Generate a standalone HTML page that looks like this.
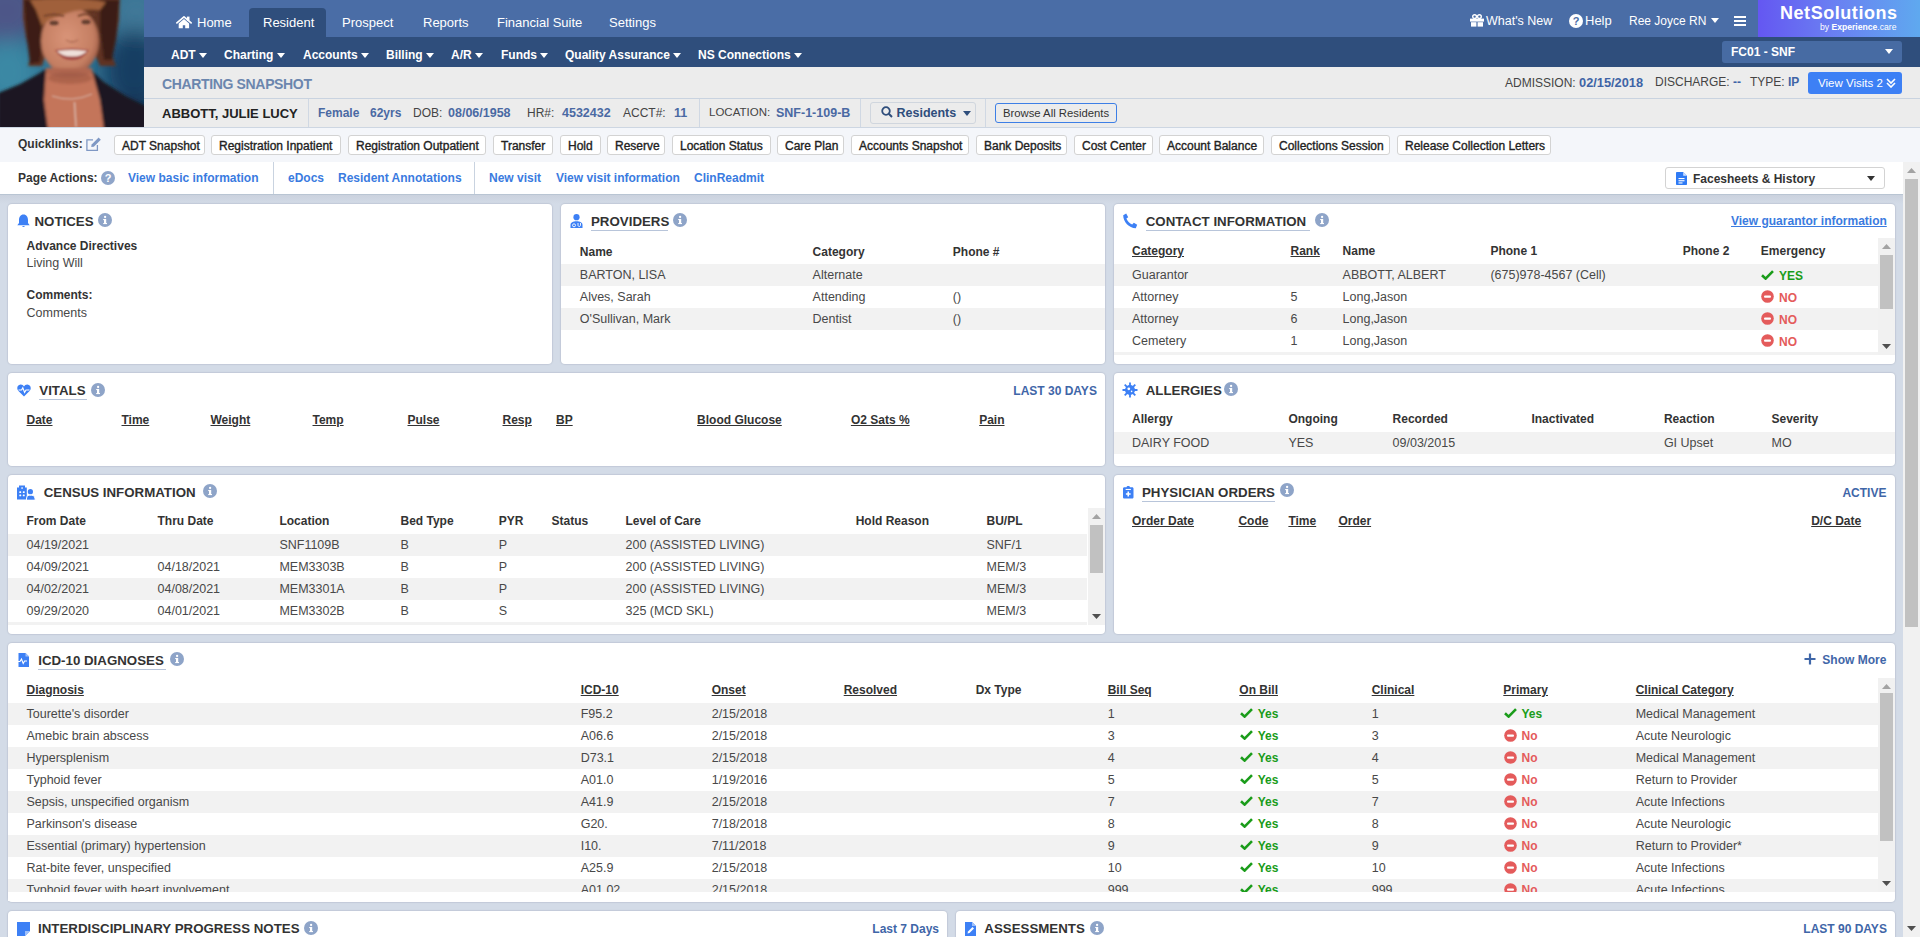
<!DOCTYPE html>
<html><head><meta charset="utf-8">
<style>
*{box-sizing:border-box}
html,body{margin:0;padding:0}
body{width:1920px;height:937px;overflow:hidden;position:relative;font-family:"Liberation Sans",sans-serif;color:#333;background:#fff}
.a{position:absolute;white-space:nowrap}
#photo{left:0;top:0;width:144px;height:127px;overflow:hidden;background:#1f4f72}
#topnav{left:144px;top:0;width:1614px;height:37px;background:#4a6da6;color:#fff;font-size:13px}
#logo{left:1758px;top:0;width:162px;height:37px;background:linear-gradient(90deg,#6457f2 0%,#6a7ef2 45%,#5fa9ef 100%);color:#fff}
#subnav{left:144px;top:37px;width:1776px;height:30px;background:#2f4e7c;color:#fff;font-size:12px;font-weight:bold}
#snap{left:144px;top:67px;width:1776px;height:60px;background:#ececec}
#ql{left:0;top:127px;width:1920px;height:35px;background:#f4f6fa;border-top:1px solid #cdd6e2}
#scroll{left:0;top:162px;width:1920px;height:775px;background:linear-gradient(#cbd2de 33px,#d3dbe7 42px);overflow:hidden}
#sbar{left:1903px;top:0;width:17px;height:775px;background:#f1f1f1}
#pa{left:0;top:0;width:1903px;height:33px;background:#fff;border-bottom:1px solid #b9c5d3}
.caret{display:inline-block;width:0;height:0;border-left:4px solid transparent;border-right:4px solid transparent;border-top:5px solid currentColor;vertical-align:middle}
.qb{position:absolute;top:7px;height:20px;border:1px solid #d3d3d3;border-radius:3px;background:#fff;font-size:12px;line-height:20.5px;padding:0 7px;color:#222;-webkit-text-stroke:.35px #222}
.lnk{color:#3a7be0;font-weight:bold;font-size:12px}
.panel{position:absolute;background:#fff;border-radius:4px;box-shadow:0 0 1px 1px rgba(120,130,150,.18)}
.ptitle{position:absolute;font-size:13px;font-weight:bold;color:#333;letter-spacing:.1px}
.ptitle u{text-decoration:none;border-bottom:1px solid #b9c6dc;padding-bottom:1px}
.info{position:absolute;width:14px;height:14px;border-radius:50%;background:#8fa5c9;color:#fff;font-size:10px;font-weight:bold;text-align:center;line-height:14px;font-family:"Liberation Serif",serif}
.th{position:absolute;font-size:12px;font-weight:bold;color:#333}
.th.u{text-decoration:underline}
.td{position:absolute;font-size:12px;color:#444}
.stripe{position:absolute;background:#f2f2f2;height:22px}
.yes{color:#1d9b1d;font-weight:bold}
.no{color:#e25252;font-weight:bold}
</style></head>
<body>

<!-- PHOTO -->
<div id="photo" class="a">
<svg width="144" height="127" viewBox="0 0 144 127">
<defs>
<filter id="bl" x="-50%" y="-50%" width="200%" height="200%"><feGaussianBlur stdDeviation="10"/></filter>
<filter id="bl2" x="-20%" y="-20%" width="140%" height="140%"><feGaussianBlur stdDeviation="1.8"/></filter>
<filter id="bl3" x="-30%" y="-30%" width="160%" height="160%"><feGaussianBlur stdDeviation=".9"/></filter>
<radialGradient id="face" cx=".45" cy=".45" r=".6"><stop offset="0" stop-color="#d99478"/><stop offset=".75" stop-color="#c47e62"/><stop offset="1" stop-color="#9c5a44"/></radialGradient>
</defs>
<rect width="144" height="127" fill="#2f7090"/>
<g filter="url(#bl)">
<ellipse cx="6" cy="10" rx="36" ry="32" fill="#4d5688"/>
<ellipse cx="8" cy="72" rx="30" ry="32" fill="#3a88a4"/>
<ellipse cx="136" cy="14" rx="26" ry="26" fill="#3f7898"/>
<ellipse cx="134" cy="70" rx="30" ry="40" fill="#173d62"/>
<ellipse cx="136" cy="120" rx="26" ry="20" fill="#102a48"/>
</g>
<g filter="url(#bl2)">
<path d="M23 -4 L120 -4 L119 20 L116 40 L112 56 L116 66 L100 66 L92 48 L48 48 L42 66 L28 66 L31 56 L26 38 L23 18 Z" fill="#5e3220"/>
<path d="M24 0 L40 0 L42 40 L40 62 L30 64 L27 40 Z" fill="#3e1e14"/>
<path d="M100 0 L119 0 L116 40 L112 60 L104 60 L100 30 Z" fill="#3a1e16"/>
<ellipse cx="70" cy="41" rx="29" ry="34" fill="url(#face)"/>
<path d="M46 68 L92 68 L96 100 L46 100 Z" fill="#b06650"/>
<path d="M44 72 Q70 84 94 72 L100 100 L106 130 L46 130 L42 100 Z" fill="#c4745a"/>
<ellipse cx="70" cy="78" rx="22" ry="6" fill="#9a5542" opacity=".55"/>
<path d="M-2 93 L20 84 L38 74 L46 69 L44 100 L48 130 L-2 130 Z" fill="#1b1720"/>
<path d="M92 71 L104 82 L126 96 L146 106 L146 130 L104 130 L100 100 Z" fill="#1a1620"/>
<path d="M30 0 Q70 -4 106 2 L100 10 Q78 8 60 16 Q50 18 42 26 L36 10 Z" fill="#a0603a"/>
</g>
<g filter="url(#bl3)">
<path d="M44 16 Q54 13 64 16" stroke="#6a3a28" stroke-width="1.6" fill="none"/>
<path d="M78 16 Q88 12 96 15" stroke="#6a3a28" stroke-width="1.6" fill="none"/>
<ellipse cx="54" cy="23" rx="4.5" ry="2.2" fill="#4a2a22" opacity=".8"/>
<ellipse cx="86" cy="22" rx="4.5" ry="2.2" fill="#4a2a22" opacity=".8"/>
<path d="M66 40 Q72 44 78 40" stroke="#9a5a44" stroke-width="1.4" fill="none" opacity=".7"/>
<path d="M55 50 Q72 47 89 50 Q83 60 72 60 Q61 60 55 50 Z" fill="#a24a44"/>
<path d="M57 51 Q72 49 87 51 Q82 56.5 72 56.5 Q62 56.5 57 51 Z" fill="#efe0da"/>
<path d="M52 96 Q72 103 92 94" stroke="#d9c0b8" stroke-width=".9" fill="none"/>
<path d="M74.5 102 L76 127" stroke="#dcc4bc" stroke-width="1.3" fill="none"/>
</g>
</svg>
</div>

<!-- TOP NAV -->
<div id="topnav" class="a">
  <div class="a" style="left:105px;top:8px;width:77px;height:29px;background:#2f4e7c;border-radius:4px 4px 0 0"></div>
  <svg class="a" style="left:32px;top:15.5px" width="16" height="13" viewBox="0 0 16 13"><path d="M0.9 6.9 L8 0.9 L15.1 6.9" stroke="#fff" stroke-width="1.7" fill="none" stroke-linecap="round"/><rect x="10.9" y="0.6" width="2.6" height="4.2" fill="#fff"/><path d="M2.7 7.4 L8 3 L13.1 7.4 L13.1 12.3 L9.2 12.3 L9.2 9.3 L6.8 9.3 L6.8 12.3 L2.7 12.3 Z" fill="#fff"/></svg>
  <div class="a" style="left:53px;top:15px;font-size:13px">Home</div>
  <div class="a" style="left:119px;top:15px;font-size:13px">Resident</div>
  <div class="a" style="left:198px;top:15px;font-size:13px">Prospect</div>
  <div class="a" style="left:279px;top:15px;font-size:13px">Reports</div>
  <div class="a" style="left:353px;top:15px;font-size:13px">Financial Suite</div>
  <div class="a" style="left:465px;top:15px;font-size:13px">Settings</div>

  <svg class="a" style="left:1326px;top:13.5px" width="14" height="13" viewBox="0 0 14 13"><circle cx="4.6" cy="2.6" r="1.9" stroke="#fff" stroke-width="1.4" fill="none"/><circle cx="9.4" cy="2.6" r="1.9" stroke="#fff" stroke-width="1.4" fill="none"/><rect x="0" y="4.6" width="14" height="3" fill="#fff"/><rect x="1" y="8.2" width="5.4" height="4.4" fill="#fff"/><rect x="7.6" y="8.2" width="5.4" height="4.4" fill="#fff"/></svg>
  <div class="a" style="left:1342px;top:14px;font-size:12.5px">What's New</div>
  <div class="a" style="left:1425px;top:13.5px;width:14px;height:14px;border-radius:50%;background:#fff;color:#4a6da6;font-size:11px;font-weight:bold;text-align:center;line-height:14px">?</div>
  <div class="a" style="left:1441px;top:13px;font-size:13px">Help</div>
  <div class="a" style="left:1485px;top:14px;font-size:12px">Ree Joyce RN <span class="caret" style="margin-left:1px;margin-top:-2px"></span></div>
  <div class="a" style="left:1590px;top:16px;width:12px;height:2px;background:#fff"></div>
  <div class="a" style="left:1590px;top:20px;width:12px;height:2px;background:#fff"></div>
  <div class="a" style="left:1590px;top:24px;width:12px;height:2px;background:#fff"></div>
</div>
<div id="logo" class="a">
  <div class="a" style="left:22px;top:3px;font-size:18px;font-weight:bold;letter-spacing:.55px">NetSolutions</div>
  <div class="a" style="left:62px;top:22px;font-size:8.6px">by <b>Experience</b>.care</div>
</div>

<!-- SUB NAV -->
<div id="subnav" class="a">
  <div class="a" style="left:27px;top:11px">ADT <span class="caret"></span></div>
  <div class="a" style="left:80px;top:11px">Charting <span class="caret"></span></div>
  <div class="a" style="left:159px;top:11px">Accounts <span class="caret"></span></div>
  <div class="a" style="left:242px;top:11px">Billing <span class="caret"></span></div>
  <div class="a" style="left:307px;top:11px">A/R <span class="caret"></span></div>
  <div class="a" style="left:357px;top:11px">Funds <span class="caret"></span></div>
  <div class="a" style="left:421px;top:11px">Quality Assurance <span class="caret"></span></div>
  <div class="a" style="left:554px;top:11px">NS Connections <span class="caret"></span></div>
  <div class="a" style="left:1578px;top:4px;width:180px;height:22px;background:#476ba3;border-radius:3px">
    <div class="a" style="left:9px;top:4px">FC01 - SNF</div>
    <span class="a caret" style="left:163px;top:8px"></span>
  </div>
</div>

<!-- SNAPSHOT + PATIENT BAR -->
<div id="snap" class="a">
  <div class="a" style="left:18px;top:9.5px;font-size:14px;line-height:1;letter-spacing:-.35px;font-weight:bold;color:#6b86ae">CHARTING SNAPSHOT</div>
  <div class="a" style="left:1361px;top:8px;font-size:12px;color:#444">ADMISSION: <b style="color:#3f64a6;font-size:12.8px">02/15/2018</b></div>
  <div class="a" style="left:1511px;top:8px;font-size:12px;color:#444">DISCHARGE: <b style="color:#3f64a6">--</b></div>
  <div class="a" style="left:1606px;top:8px;font-size:12px;color:#444">TYPE: <b style="color:#3f64a6">IP</b></div>
  <div class="a" style="left:1664px;top:5px;width:94px;height:22px;background:#3d80f5;border-radius:3px;color:#fff;font-size:11.5px;padding:5px 0 0 10px">View Visits 2 <svg width="10" height="10" viewBox="0 0 10 10" style="vertical-align:-1px"><path d="M1 1 L5 5 L9 1 M1 5 L5 9 L9 5" stroke="#fff" stroke-width="1.6" fill="none"/></svg></div>
  <div class="a" style="left:0;top:31px;width:1776px;height:1px;background:#c9d3e0"></div>
  <div class="a" style="left:164px;top:32px;width:1px;height:28px;background:#d0d8e3"></div>
  <div class="a" style="left:18px;top:38.5px;font-size:13px;font-weight:bold;color:#222">ABBOTT, JULIE LUCY</div>
  <div class="a" style="left:174px;top:38.5px;font-size:12px;font-weight:bold;color:#4a69a3">Female</div>
  <div class="a" style="left:226px;top:38.5px;font-size:12px;font-weight:bold;color:#4a69a3">62yrs</div>
  <div class="a" style="left:269px;top:38.5px;font-size:12px;color:#444">DOB:</div>
  <div class="a" style="left:304px;top:38.5px;font-size:12.5px;font-weight:bold;color:#4a69a3">08/06/1958</div>
  <div class="a" style="left:383px;top:38.5px;font-size:12px;color:#444">HR#:</div>
  <div class="a" style="left:418px;top:38.5px;font-size:12.5px;font-weight:bold;color:#4a69a3">4532432</div>
  <div class="a" style="left:479px;top:38.5px;font-size:12px;color:#444">ACCT#:</div>
  <div class="a" style="left:530px;top:38.5px;font-size:12.5px;font-weight:bold;color:#4a69a3">11</div>
  <div class="a" style="left:555px;top:32px;width:1px;height:28px;background:#d0d8e3"></div>
  <div class="a" style="left:565px;top:38.5px;font-size:11.5px;color:#444">LOCATION:</div>
  <div class="a" style="left:632px;top:38.5px;font-size:12.5px;font-weight:bold;color:#4a69a3">SNF-1-109-B</div>
  <div class="a" style="left:716px;top:32px;width:1px;height:28px;background:#d0d8e3"></div>
  <div class="a" style="left:726px;top:35px;width:106px;height:22px;border:1px solid #d0d6de;border-radius:3px;color:#2f4e7c;font-size:12.5px;font-weight:bold;padding:3px 0 0 10px">
    <svg width="12" height="12" viewBox="0 0 12 12" style="vertical-align:-1px"><circle cx="5" cy="5" r="3.8" stroke="#2f4e7c" stroke-width="1.8" fill="none"/><path d="M7.8 7.8 L11 11" stroke="#2f4e7c" stroke-width="2"/></svg> Residents <span class="caret" style="margin-left:3px"></span>
  </div>
  <div class="a" style="left:841px;top:32px;width:1px;height:28px;background:#d0d8e3"></div>
  <div class="a" style="left:851px;top:36px;width:122px;height:20px;border:1px solid #3d7fe6;border-radius:3px;color:#333;font-size:11.3px;text-align:center;line-height:18px">Browse All Residents</div>
</div>

<!-- QUICKLINKS -->
<div id="ql" class="a">
  <div class="a" style="left:18px;top:9px;font-size:12px;font-weight:bold;color:#333">Quicklinks:</div>
  <svg class="a" style="left:86px;top:9px" width="16" height="15" viewBox="0 0 16 15"><path d="M7 2.8 H0.9 V13.3 H11.4 V8" stroke="#7f98c4" stroke-width="1.3" fill="none"/><path d="M5.2 10 L5.6 7.6 L12.6 0.6 L14.8 2.8 L7.8 9.8 Z" fill="#7f98c4"/></svg>
  <div class="qb" style="left:114px;width:91px">ADT Snapshot</div>
  <div class="qb" style="left:211px;width:130px">Registration Inpatient</div>
  <div class="qb" style="left:348px;width:138px">Registration Outpatient</div>
  <div class="qb" style="left:493px;width:60px">Transfer</div>
  <div class="qb" style="left:560px;width:41px">Hold</div>
  <div class="qb" style="left:607px;width:58px">Reserve</div>
  <div class="qb" style="left:672px;width:99px">Location Status</div>
  <div class="qb" style="left:777px;width:67px">Care Plan</div>
  <div class="qb" style="left:851px;width:118px">Accounts Snapshot</div>
  <div class="qb" style="left:976px;width:91px">Bank Deposits</div>
  <div class="qb" style="left:1074px;width:79px">Cost Center</div>
  <div class="qb" style="left:1159px;width:105px">Account Balance</div>
  <div class="qb" style="left:1271px;width:119px">Collections Session</div>
  <div class="qb" style="left:1397px;width:154px">Release Collection Letters</div>
</div>

<!-- SCROLL AREA -->
<div id="scroll" class="a">
  <div id="pa" class="a">
    <div class="a" style="left:18px;top:9px;font-size:12px;font-weight:bold;color:#333">Page Actions:</div>
    <div class="a" style="left:101px;top:9px;width:14px;height:14px;border-radius:50%;background:#8fa5c9;color:#fff;font-size:11px;font-weight:bold;text-align:center;line-height:14px">?</div>
    <div class="a lnk" style="left:128px;top:9px">View basic information</div>
    <div class="a" style="left:273px;top:0;width:1px;height:32px;background:#c9d3e0"></div>
    <div class="a lnk" style="left:288px;top:9px">eDocs</div>
    <div class="a lnk" style="left:338px;top:9px">Resident Annotations</div>
    <div class="a" style="left:474px;top:0;width:1px;height:32px;background:#c9d3e0"></div>
    <div class="a lnk" style="left:489px;top:9px">New visit</div>
    <div class="a lnk" style="left:556px;top:9px">View visit information</div>
    <div class="a lnk" style="left:694px;top:9px">ClinReadmit</div>
    <div class="a" style="left:1665px;top:5px;width:220px;height:22px;border:1px solid #d3d3d3;border-radius:3px;font-size:12px;font-weight:bold;color:#333">
      <svg class="a" style="left:10px;top:4px" width="11" height="13" viewBox="0 0 11 13"><path d="M0.8 0 H7.2 L11 3.8 V12.2 Q11 13 10.2 13 H0.8 Q0 13 0 12.2 V0.8 Q0 0 0.8 0 Z" fill="#2f7bf5"/><path d="M7.2 0 V3.8 H11 Z" fill="#cfe0fd"/><rect x="2.5" y="6" width="6" height="1.1" fill="#fff"/><rect x="2.5" y="8.2" width="6" height="1.1" fill="#fff"/><rect x="2.5" y="10.4" width="4" height="1.1" fill="#fff"/></svg>
      <div class="a" style="left:27px;top:4px">Facesheets &amp; History</div>
      <span class="a caret" style="left:201px;top:8px;color:#333"></span>
    </div>
  </div>

  <div id="sbar" class="a">
    <div class="a" style="left:2px;top:17px;width:13px;height:448px;background:#c1c1c1"></div>
  </div>
</div>


<!-- PANELS -->
<div class="a panel" style="left:8px;top:204px;width:544px;height:160px"></div>
<svg class="a" style="left:17px;top:214px" width="13" height="14" viewBox="0 0 13 14"><path d="M6.5 0.5 C3.5 0.5 2 3 2 6 L2 9 L0.3 11.3 L12.7 11.3 L11 9 L11 6 C11 3 9.5 0.5 6.5 0.5 Z" fill="#3d80f5"/><path d="M5 12 Q6.5 14.2 8 12 Z" fill="#3d80f5"/></svg>
<div class="a" style="left:34.5px;top:214.7px;font-size:13.3px;line-height:1;color:#333;font-weight:bold">NOTICES</div>
<svg class="a" style="left:98px;top:213px" width="14" height="14" viewBox="0 0 14 14"><circle cx="7" cy="7" r="7" fill="#8ea4c8"/><rect x="6" y="6" width="2.2" height="5" fill="#fff"/><rect x="5.2" y="6" width="2" height="1.1" fill="#fff"/><rect x="5.2" y="10" width="3.8" height="1.1" fill="#fff"/><circle cx="7.1" cy="4" r="1.15" fill="#fff"/></svg>
<div class="a" style="left:26.5px;top:239.6px;font-size:12px;line-height:1;color:#333;font-weight:bold">Advance Directives</div>
<div class="a" style="left:26.5px;top:257.4px;font-size:12.5px;line-height:1;color:#484848">Living Will</div>
<div class="a" style="left:26.5px;top:289.2px;font-size:12px;line-height:1;color:#333;font-weight:bold">Comments:</div>
<div class="a" style="left:26.5px;top:306.8px;font-size:12.5px;line-height:1;color:#484848">Comments</div>
<div class="a panel" style="left:561px;top:204px;width:544px;height:160px"></div>
<svg class="a" style="left:570px;top:214px" width="13" height="14" viewBox="0 0 13 14"><circle cx="6.5" cy="3.2" r="3.1" fill="#3d80f5"/><path d="M0.5 14 L0.5 11 C0.5 8.5 3 7.3 6.5 7.3 C10 7.3 12.5 8.5 12.5 11 L12.5 14 Z" fill="#3d80f5"/><circle cx="4" cy="11.3" r="1.5" fill="none" stroke="#fff" stroke-width=".9"/><path d="M8 9 L8 11.5 A1.3 1.3 0 0 0 10.5 11.5 L10.5 9" fill="none" stroke="#fff" stroke-width=".9"/></svg>
<div class="a" style="left:591.0px;top:214.7px;font-size:13.3px;line-height:1;color:#333;font-weight:bold">PROVIDERS</div>
<div class="a" style="left:591px;top:230px;width:77px;height:1px;background:#b8c5da;"></div>
<svg class="a" style="left:673px;top:213px" width="14" height="14" viewBox="0 0 14 14"><circle cx="7" cy="7" r="7" fill="#8ea4c8"/><rect x="6" y="6" width="2.2" height="5" fill="#fff"/><rect x="5.2" y="6" width="2" height="1.1" fill="#fff"/><rect x="5.2" y="10" width="3.8" height="1.1" fill="#fff"/><circle cx="7.1" cy="4" r="1.15" fill="#fff"/></svg>
<div class="a" style="left:579.8px;top:245.5px;font-size:12px;line-height:1;color:#333;font-weight:bold">Name</div>
<div class="a" style="left:812.6px;top:245.5px;font-size:12px;line-height:1;color:#333;font-weight:bold">Category</div>
<div class="a" style="left:952.8px;top:245.5px;font-size:12px;line-height:1;color:#333;font-weight:bold">Phone #</div>
<div class="a" style="left:561px;top:264px;width:544px;height:22px;background:#f2f2f2;"></div>
<div class="a" style="left:561px;top:308px;width:544px;height:22px;background:#f2f2f2;"></div>
<div class="a" style="left:579.8px;top:268.7px;font-size:12.5px;line-height:1;color:#484848">BARTON, LISA</div>
<div class="a" style="left:812.6px;top:268.7px;font-size:12.5px;line-height:1;color:#484848">Alternate</div>
<div class="a" style="left:579.8px;top:290.7px;font-size:12.5px;line-height:1;color:#484848">Alves, Sarah</div>
<div class="a" style="left:812.6px;top:290.7px;font-size:12.5px;line-height:1;color:#484848">Attending</div>
<div class="a" style="left:952.8px;top:290.7px;font-size:12.5px;line-height:1;color:#484848">()</div>
<div class="a" style="left:579.8px;top:312.7px;font-size:12.5px;line-height:1;color:#484848">O&#x27;Sullivan, Mark</div>
<div class="a" style="left:812.6px;top:312.7px;font-size:12.5px;line-height:1;color:#484848">Dentist</div>
<div class="a" style="left:952.8px;top:312.7px;font-size:12.5px;line-height:1;color:#484848">()</div>
<div class="a panel" style="left:1114px;top:204px;width:781px;height:160px"></div>
<svg class="a" style="left:1122px;top:213px" width="16" height="16" viewBox="0 0 16 16"><path d="M1.2 2.2 L4.2 0.6 L6.2 4.2 L4.4 5.6 C5.2 8 7.6 10.6 10.2 11.4 L11.8 9.8 L15.2 11.8 L13.8 15.2 C7 15 1.2 9 1.2 2.2 Z" fill="#3d80f5"/></svg>
<div class="a" style="left:1145.7px;top:214.7px;font-size:13.3px;line-height:1;color:#333;font-weight:bold">CONTACT INFORMATION</div>
<div class="a" style="left:1145.7px;top:230px;width:164px;height:1px;background:#b8c5da;"></div>
<svg class="a" style="left:1315px;top:213px" width="14" height="14" viewBox="0 0 14 14"><circle cx="7" cy="7" r="7" fill="#8ea4c8"/><rect x="6" y="6" width="2.2" height="5" fill="#fff"/><rect x="5.2" y="6" width="2" height="1.1" fill="#fff"/><rect x="5.2" y="10" width="3.8" height="1.1" fill="#fff"/><circle cx="7.1" cy="4" r="1.15" fill="#fff"/></svg>
<div class="a" style="left:1731.0px;top:214.8px;font-size:12px;line-height:1;color:#3a7be0;font-weight:bold;text-decoration:underline">View guarantor information</div>
<div class="a" style="left:1132.0px;top:244.8px;font-size:12px;line-height:1;color:#333;font-weight:bold;text-decoration:underline">Category</div>
<div class="a" style="left:1290.5px;top:244.8px;font-size:12px;line-height:1;color:#333;font-weight:bold;text-decoration:underline">Rank</div>
<div class="a" style="left:1342.6px;top:244.8px;font-size:12px;line-height:1;color:#333;font-weight:bold">Name</div>
<div class="a" style="left:1490.4px;top:244.8px;font-size:12px;line-height:1;color:#333;font-weight:bold">Phone 1</div>
<div class="a" style="left:1682.7px;top:244.8px;font-size:12px;line-height:1;color:#333;font-weight:bold">Phone 2</div>
<div class="a" style="left:1760.8px;top:244.8px;font-size:12px;line-height:1;color:#333;font-weight:bold">Emergency</div>
<div class="a" style="left:1114px;top:264px;width:764px;height:22px;background:#f2f2f2;"></div>
<div class="a" style="left:1114px;top:308px;width:764px;height:22px;background:#f2f2f2;"></div>
<div class="a" style="left:1114px;top:352px;width:764px;height:3px;background:#f2f2f2;"></div>
<div class="a" style="left:1132.0px;top:269.2px;font-size:12.5px;line-height:1;color:#484848">Guarantor</div>
<div class="a" style="left:1342.6px;top:269.2px;font-size:12.5px;line-height:1;color:#484848">ABBOTT, ALBERT</div>
<div class="a" style="left:1490.4px;top:269.2px;font-size:12.5px;line-height:1;color:#484848">(675)978-4567 (Cell)</div>
<svg class="a" style="left:1760.5px;top:269.5px" width="13" height="10" viewBox="0 0 13 10"><path d="M1 5.2 L4.6 8.6 L12 1.2" stroke="#1a9c1a" stroke-width="2.6" fill="none" stroke-linejoin="miter"/></svg>
<div class="a" style="left:1779.0px;top:269.6px;font-size:12px;line-height:1;color:#1a9c1a;font-weight:bold">YES</div>
<div class="a" style="left:1132.0px;top:291.2px;font-size:12.5px;line-height:1;color:#484848">Attorney</div>
<div class="a" style="left:1290.5px;top:291.2px;font-size:12.5px;line-height:1;color:#484848">5</div>
<div class="a" style="left:1342.6px;top:291.2px;font-size:12.5px;line-height:1;color:#484848">Long,Jason</div>
<svg class="a" style="left:1760.5px;top:290px" width="13" height="13" viewBox="0 0 13 13"><circle cx="6.5" cy="6.5" r="6.3" fill="#e45b5b"/><rect x="3" y="5.4" width="7" height="2.3" rx="1" fill="#fff"/></svg>
<div class="a" style="left:1779.0px;top:291.6px;font-size:12px;line-height:1;color:#e45b5b;font-weight:bold">NO</div>
<div class="a" style="left:1132.0px;top:313.2px;font-size:12.5px;line-height:1;color:#484848">Attorney</div>
<div class="a" style="left:1290.5px;top:313.2px;font-size:12.5px;line-height:1;color:#484848">6</div>
<div class="a" style="left:1342.6px;top:313.2px;font-size:12.5px;line-height:1;color:#484848">Long,Jason</div>
<svg class="a" style="left:1760.5px;top:312px" width="13" height="13" viewBox="0 0 13 13"><circle cx="6.5" cy="6.5" r="6.3" fill="#e45b5b"/><rect x="3" y="5.4" width="7" height="2.3" rx="1" fill="#fff"/></svg>
<div class="a" style="left:1779.0px;top:313.6px;font-size:12px;line-height:1;color:#e45b5b;font-weight:bold">NO</div>
<div class="a" style="left:1132.0px;top:335.2px;font-size:12.5px;line-height:1;color:#484848">Cemetery</div>
<div class="a" style="left:1290.5px;top:335.2px;font-size:12.5px;line-height:1;color:#484848">1</div>
<div class="a" style="left:1342.6px;top:335.2px;font-size:12.5px;line-height:1;color:#484848">Long,Jason</div>
<svg class="a" style="left:1760.5px;top:334px" width="13" height="13" viewBox="0 0 13 13"><circle cx="6.5" cy="6.5" r="6.3" fill="#e45b5b"/><rect x="3" y="5.4" width="7" height="2.3" rx="1" fill="#fff"/></svg>
<div class="a" style="left:1779.0px;top:335.6px;font-size:12px;line-height:1;color:#e45b5b;font-weight:bold">NO</div>
<div class="a" style="left:1878px;top:238px;width:17px;height:117px;background:#f1f1f1;"></div>
<div class="a" style="left:1880px;top:255px;width:13px;height:54px;background:#c1c1c1;"></div>
<svg class="a" style="left:1882px;top:244px" width="9" height="5" viewBox="0 0 9 5"><path d="M0 5 L4.5 0 L9 5 Z" fill="#a3a3a3"/></svg>
<svg class="a" style="left:1882px;top:344px" width="9" height="5" viewBox="0 0 9 5"><path d="M0 0 L4.5 5 L9 0 Z" fill="#505050"/></svg>
<div class="a panel" style="left:8px;top:373px;width:1097px;height:93px"></div>
<svg class="a" style="left:17px;top:384px" width="14" height="13" viewBox="0 0 14 13"><path d="M7 12.5 L1.2 6.8 C-0.6 4.8 0.2 0.8 3.6 0.6 C5.2 0.5 6.3 1.5 7 2.5 C7.7 1.5 8.8 0.5 10.4 0.6 C13.8 0.8 14.6 4.8 12.8 6.8 Z" fill="#3d80f5"/><path d="M1.5 6 L4.5 6 L5.8 3.8 L7.6 8.4 L9 6 L12.5 6" stroke="#fff" stroke-width="1.1" fill="none"/></svg>
<div class="a" style="left:39.3px;top:384.1px;font-size:13.3px;line-height:1;color:#333;font-weight:bold">VITALS</div>
<div class="a" style="left:39.3px;top:399px;width:48px;height:1px;background:#b8c5da;"></div>
<svg class="a" style="left:91px;top:383px" width="14" height="14" viewBox="0 0 14 14"><circle cx="7" cy="7" r="7" fill="#8ea4c8"/><rect x="6" y="6" width="2.2" height="5" fill="#fff"/><rect x="5.2" y="6" width="2" height="1.1" fill="#fff"/><rect x="5.2" y="10" width="3.8" height="1.1" fill="#fff"/><circle cx="7.1" cy="4" r="1.15" fill="#fff"/></svg>
<div class="a" style="left:1013.3px;top:384.8px;font-size:12px;line-height:1;color:#3f66a8;font-weight:bold">LAST 30 DAYS</div>
<div class="a" style="left:26.5px;top:414.3px;font-size:12px;line-height:1;color:#333;font-weight:bold;text-decoration:underline">Date</div>
<div class="a" style="left:121.5px;top:414.3px;font-size:12px;line-height:1;color:#333;font-weight:bold;text-decoration:underline">Time</div>
<div class="a" style="left:210.5px;top:414.3px;font-size:12px;line-height:1;color:#333;font-weight:bold;text-decoration:underline">Weight</div>
<div class="a" style="left:312.5px;top:414.3px;font-size:12px;line-height:1;color:#333;font-weight:bold;text-decoration:underline">Temp</div>
<div class="a" style="left:407.5px;top:414.3px;font-size:12px;line-height:1;color:#333;font-weight:bold;text-decoration:underline">Pulse</div>
<div class="a" style="left:502.5px;top:414.3px;font-size:12px;line-height:1;color:#333;font-weight:bold;text-decoration:underline">Resp</div>
<div class="a" style="left:556.0px;top:414.3px;font-size:12px;line-height:1;color:#333;font-weight:bold;text-decoration:underline">BP</div>
<div class="a" style="left:697.1px;top:414.3px;font-size:12px;line-height:1;color:#333;font-weight:bold;text-decoration:underline">Blood Glucose</div>
<div class="a" style="left:850.9px;top:414.3px;font-size:12px;line-height:1;color:#333;font-weight:bold;text-decoration:underline">O2 Sats %</div>
<div class="a" style="left:979.2px;top:414.3px;font-size:12px;line-height:1;color:#333;font-weight:bold;text-decoration:underline">Pain</div>
<div class="a panel" style="left:1114px;top:373px;width:781px;height:93px"></div>
<svg class="a" style="left:1122px;top:382px" width="16" height="16" viewBox="0 0 16 16"><g fill="#3d80f5"><circle cx="8" cy="8" r="5"/><g stroke="#3d80f5" stroke-width="1.8"><path d="M8 0.5 V15.5 M0.5 8 H15.5 M2.7 2.7 L13.3 13.3 M13.3 2.7 L2.7 13.3"/></g></g><circle cx="6.8" cy="6.8" r="1.4" fill="#fff"/><circle cx="9.6" cy="9.4" r=".8" fill="#fff"/></svg>
<div class="a" style="left:1145.7px;top:383.7px;font-size:13.3px;line-height:1;color:#333;font-weight:bold">ALLERGIES</div>
<svg class="a" style="left:1224px;top:382px" width="14" height="14" viewBox="0 0 14 14"><circle cx="7" cy="7" r="7" fill="#8ea4c8"/><rect x="6" y="6" width="2.2" height="5" fill="#fff"/><rect x="5.2" y="6" width="2" height="1.1" fill="#fff"/><rect x="5.2" y="10" width="3.8" height="1.1" fill="#fff"/><circle cx="7.1" cy="4" r="1.15" fill="#fff"/></svg>
<div class="a" style="left:1132.0px;top:413.3px;font-size:12px;line-height:1;color:#333;font-weight:bold">Allergy</div>
<div class="a" style="left:1288.4px;top:413.3px;font-size:12px;line-height:1;color:#333;font-weight:bold">Ongoing</div>
<div class="a" style="left:1392.6px;top:413.3px;font-size:12px;line-height:1;color:#333;font-weight:bold">Recorded</div>
<div class="a" style="left:1531.4px;top:413.3px;font-size:12px;line-height:1;color:#333;font-weight:bold">Inactivated</div>
<div class="a" style="left:1663.9px;top:413.3px;font-size:12px;line-height:1;color:#333;font-weight:bold">Reaction</div>
<div class="a" style="left:1771.5px;top:413.3px;font-size:12px;line-height:1;color:#333;font-weight:bold">Severity</div>
<div class="a" style="left:1114px;top:432px;width:781px;height:22px;background:#f2f2f2;"></div>
<div class="a" style="left:1132.0px;top:436.7px;font-size:12.5px;line-height:1;color:#484848">DAIRY FOOD</div>
<div class="a" style="left:1288.4px;top:436.7px;font-size:12.5px;line-height:1;color:#484848">YES</div>
<div class="a" style="left:1392.6px;top:436.7px;font-size:12.5px;line-height:1;color:#484848">09/03/2015</div>
<div class="a" style="left:1663.9px;top:436.7px;font-size:12.5px;line-height:1;color:#484848">GI Upset</div>
<div class="a" style="left:1771.5px;top:436.7px;font-size:12.5px;line-height:1;color:#484848">MO</div>
<div class="a panel" style="left:8px;top:475px;width:1097px;height:159px"></div>
<svg class="a" style="left:17px;top:484.5px" width="19" height="15" viewBox="0 0 19 15"><path d="M2 0.4 H8 V2.6 H9.8 V14.6 H0 V2.6 H2 Z" fill="#3d80f5"/><g fill="#fff"><rect x="4.3" y="2.2" width="1.6" height="1.6" rx=".6"/><rect x="2.3" y="6.2" width="1.9" height="1.7" rx=".5"/><rect x="5.8" y="6.2" width="1.9" height="1.7" rx=".5"/><rect x="2.3" y="9.6" width="1.9" height="1.7" rx=".5"/><rect x="5.8" y="9.6" width="1.9" height="1.7" rx=".5"/></g><circle cx="13.4" cy="6.7" r="2.6" fill="#3d80f5"/><path d="M9.4 15.2 Q9.4 10.2 12.4 10.2 H14.6 Q18.2 10.2 18.2 15.2 Z" fill="#3d80f5" stroke="#fff" stroke-width="1"/></svg>
<div class="a" style="left:43.7px;top:485.7px;font-size:13.3px;line-height:1;color:#333;font-weight:bold">CENSUS INFORMATION</div>
<svg class="a" style="left:203px;top:484px" width="14" height="14" viewBox="0 0 14 14"><circle cx="7" cy="7" r="7" fill="#8ea4c8"/><rect x="6" y="6" width="2.2" height="5" fill="#fff"/><rect x="5.2" y="6" width="2" height="1.1" fill="#fff"/><rect x="5.2" y="10" width="3.8" height="1.1" fill="#fff"/><circle cx="7.1" cy="4" r="1.15" fill="#fff"/></svg>
<div class="a" style="left:26.5px;top:515.2px;font-size:12px;line-height:1;color:#333;font-weight:bold">From Date</div>
<div class="a" style="left:157.5px;top:515.2px;font-size:12px;line-height:1;color:#333;font-weight:bold">Thru Date</div>
<div class="a" style="left:279.4px;top:515.2px;font-size:12px;line-height:1;color:#333;font-weight:bold">Location</div>
<div class="a" style="left:400.5px;top:515.2px;font-size:12px;line-height:1;color:#333;font-weight:bold">Bed Type</div>
<div class="a" style="left:498.7px;top:515.2px;font-size:12px;line-height:1;color:#333;font-weight:bold">PYR</div>
<div class="a" style="left:551.5px;top:515.2px;font-size:12px;line-height:1;color:#333;font-weight:bold">Status</div>
<div class="a" style="left:625.5px;top:515.2px;font-size:12px;line-height:1;color:#333;font-weight:bold">Level of Care</div>
<div class="a" style="left:855.7px;top:515.2px;font-size:12px;line-height:1;color:#333;font-weight:bold">Hold Reason</div>
<div class="a" style="left:986.5px;top:515.2px;font-size:12px;line-height:1;color:#333;font-weight:bold">BU/PL</div>
<div class="a" style="left:8px;top:534px;width:1079px;height:22px;background:#f2f2f2;"></div>
<div class="a" style="left:8px;top:578px;width:1079px;height:22px;background:#f2f2f2;"></div>
<div class="a" style="left:8px;top:622px;width:1079px;height:3px;background:#f2f2f2;"></div>
<div class="a" style="left:26.5px;top:538.7px;font-size:12.5px;line-height:1;color:#484848">04/19/2021</div>
<div class="a" style="left:279.4px;top:538.7px;font-size:12.5px;line-height:1;color:#484848">SNF1109B</div>
<div class="a" style="left:400.5px;top:538.7px;font-size:12.5px;line-height:1;color:#484848">B</div>
<div class="a" style="left:498.7px;top:538.7px;font-size:12.5px;line-height:1;color:#484848">P</div>
<div class="a" style="left:625.5px;top:538.7px;font-size:12.5px;line-height:1;color:#484848">200 (ASSISTED LIVING)</div>
<div class="a" style="left:986.5px;top:538.7px;font-size:12.5px;line-height:1;color:#484848">SNF/1</div>
<div class="a" style="left:26.5px;top:560.7px;font-size:12.5px;line-height:1;color:#484848">04/09/2021</div>
<div class="a" style="left:157.5px;top:560.7px;font-size:12.5px;line-height:1;color:#484848">04/18/2021</div>
<div class="a" style="left:279.4px;top:560.7px;font-size:12.5px;line-height:1;color:#484848">MEM3303B</div>
<div class="a" style="left:400.5px;top:560.7px;font-size:12.5px;line-height:1;color:#484848">B</div>
<div class="a" style="left:498.7px;top:560.7px;font-size:12.5px;line-height:1;color:#484848">P</div>
<div class="a" style="left:625.5px;top:560.7px;font-size:12.5px;line-height:1;color:#484848">200 (ASSISTED LIVING)</div>
<div class="a" style="left:986.5px;top:560.7px;font-size:12.5px;line-height:1;color:#484848">MEM/3</div>
<div class="a" style="left:26.5px;top:582.7px;font-size:12.5px;line-height:1;color:#484848">04/02/2021</div>
<div class="a" style="left:157.5px;top:582.7px;font-size:12.5px;line-height:1;color:#484848">04/08/2021</div>
<div class="a" style="left:279.4px;top:582.7px;font-size:12.5px;line-height:1;color:#484848">MEM3301A</div>
<div class="a" style="left:400.5px;top:582.7px;font-size:12.5px;line-height:1;color:#484848">B</div>
<div class="a" style="left:498.7px;top:582.7px;font-size:12.5px;line-height:1;color:#484848">P</div>
<div class="a" style="left:625.5px;top:582.7px;font-size:12.5px;line-height:1;color:#484848">200 (ASSISTED LIVING)</div>
<div class="a" style="left:986.5px;top:582.7px;font-size:12.5px;line-height:1;color:#484848">MEM/3</div>
<div class="a" style="left:26.5px;top:604.7px;font-size:12.5px;line-height:1;color:#484848">09/29/2020</div>
<div class="a" style="left:157.5px;top:604.7px;font-size:12.5px;line-height:1;color:#484848">04/01/2021</div>
<div class="a" style="left:279.4px;top:604.7px;font-size:12.5px;line-height:1;color:#484848">MEM3302B</div>
<div class="a" style="left:400.5px;top:604.7px;font-size:12.5px;line-height:1;color:#484848">B</div>
<div class="a" style="left:498.7px;top:604.7px;font-size:12.5px;line-height:1;color:#484848">S</div>
<div class="a" style="left:625.5px;top:604.7px;font-size:12.5px;line-height:1;color:#484848">325 (MCD SKL)</div>
<div class="a" style="left:986.5px;top:604.7px;font-size:12.5px;line-height:1;color:#484848">MEM/3</div>
<div class="a" style="left:1088px;top:508px;width:17px;height:117px;background:#f1f1f1;"></div>
<div class="a" style="left:1090px;top:525px;width:13px;height:48px;background:#c1c1c1;"></div>
<svg class="a" style="left:1092px;top:514px" width="9" height="5" viewBox="0 0 9 5"><path d="M0 5 L4.5 0 L9 5 Z" fill="#a3a3a3"/></svg>
<svg class="a" style="left:1092px;top:614px" width="9" height="5" viewBox="0 0 9 5"><path d="M0 0 L4.5 5 L9 0 Z" fill="#505050"/></svg>
<div class="a panel" style="left:1114px;top:475px;width:781px;height:159px"></div>
<svg class="a" style="left:1123px;top:484.5px" width="10.5" height="14" viewBox="0 0 12 15"><path d="M1.5 2 L4 2 C4 0.3 8 0.3 8 2 L10.5 2 C11.3 2 12 2.7 12 3.5 L12 13.5 C12 14.3 11.3 15 10.5 15 L1.5 15 C0.7 15 0 14.3 0 13.5 L0 3.5 C0 2.7 0.7 2 1.5 2 Z" fill="#3d80f5"/><rect x="3" y="4" width="6" height="1.2" fill="#fff"/><path d="M6 7 V12.5 M3.3 9.8 H8.7" stroke="#fff" stroke-width="1.8"/></svg>
<div class="a" style="left:1142.0px;top:486.0px;font-size:13.3px;line-height:1;color:#333;font-weight:bold">PHYSICIAN ORDERS</div>
<div class="a" style="left:1142px;top:501px;width:133px;height:1px;background:#b8c5da;"></div>
<svg class="a" style="left:1279.5px;top:483px" width="14" height="14" viewBox="0 0 14 14"><circle cx="7" cy="7" r="7" fill="#8ea4c8"/><rect x="6" y="6" width="2.2" height="5" fill="#fff"/><rect x="5.2" y="6" width="2" height="1.1" fill="#fff"/><rect x="5.2" y="10" width="3.8" height="1.1" fill="#fff"/><circle cx="7.1" cy="4" r="1.15" fill="#fff"/></svg>
<div class="a" style="left:1842.4px;top:486.8px;font-size:12px;line-height:1;color:#3f66a8;font-weight:bold">ACTIVE</div>
<div class="a" style="left:1132.0px;top:515.3px;font-size:12px;line-height:1;color:#333;font-weight:bold;text-decoration:underline">Order Date</div>
<div class="a" style="left:1238.4px;top:515.3px;font-size:12px;line-height:1;color:#333;font-weight:bold;text-decoration:underline">Code</div>
<div class="a" style="left:1288.4px;top:515.3px;font-size:12px;line-height:1;color:#333;font-weight:bold;text-decoration:underline">Time</div>
<div class="a" style="left:1338.4px;top:515.3px;font-size:12px;line-height:1;color:#333;font-weight:bold;text-decoration:underline">Order</div>
<div class="a" style="left:1811.2px;top:515.3px;font-size:12px;line-height:1;color:#333;font-weight:bold;text-decoration:underline">D/C Date</div>
<div class="a panel" style="left:8px;top:643px;width:1887px;height:259px"></div>
<svg class="a" style="left:17px;top:653px" width="13" height="14" viewBox="0 0 13 14"><path d="M1.5 0 L8.5 0 L12 3.5 L12 14 L1.5 14 Z" fill="#3d80f5"/><path d="M8.5 0 L8.5 3.5 L12 3.5" fill="#9fc0fa"/><path d="M0 8.5 L3 8.5 L4.5 6 L6.2 10.5 L7.6 8 L10 8" stroke="#fff" stroke-width="1.1" fill="none"/></svg>
<div class="a" style="left:38.2px;top:653.7px;font-size:13.3px;line-height:1;color:#333;font-weight:bold">ICD-10 DIAGNOSES</div>
<div class="a" style="left:38.2px;top:669px;width:128px;height:1px;background:#b8c5da;"></div>
<svg class="a" style="left:170px;top:652px" width="14" height="14" viewBox="0 0 14 14"><circle cx="7" cy="7" r="7" fill="#8ea4c8"/><rect x="6" y="6" width="2.2" height="5" fill="#fff"/><rect x="5.2" y="6" width="2" height="1.1" fill="#fff"/><rect x="5.2" y="10" width="3.8" height="1.1" fill="#fff"/><circle cx="7.1" cy="4" r="1.15" fill="#fff"/></svg>
<svg class="a" style="left:1804px;top:653px" width="12" height="12" viewBox="0 0 12 12"><path d="M6 0.5 V11.5 M0.5 6 H11.5" stroke="#3f66a8" stroke-width="2.2"/></svg>
<div class="a" style="left:1822.3px;top:653.8px;font-size:12px;line-height:1;color:#3f66a8;font-weight:bold">Show More</div>
<div class="a" style="left:26.5px;top:683.8px;font-size:12px;line-height:1;color:#333;font-weight:bold;text-decoration:underline">Diagnosis</div>
<div class="a" style="left:580.7px;top:683.8px;font-size:12px;line-height:1;color:#333;font-weight:bold;text-decoration:underline">ICD-10</div>
<div class="a" style="left:711.7px;top:683.8px;font-size:12px;line-height:1;color:#333;font-weight:bold;text-decoration:underline">Onset</div>
<div class="a" style="left:843.7px;top:683.8px;font-size:12px;line-height:1;color:#333;font-weight:bold;text-decoration:underline">Resolved</div>
<div class="a" style="left:975.7px;top:683.8px;font-size:12px;line-height:1;color:#333;font-weight:bold">Dx Type</div>
<div class="a" style="left:1107.7px;top:683.8px;font-size:12px;line-height:1;color:#333;font-weight:bold;text-decoration:underline">Bill Seq</div>
<div class="a" style="left:1239.3px;top:683.8px;font-size:12px;line-height:1;color:#333;font-weight:bold;text-decoration:underline">On Bill</div>
<div class="a" style="left:1371.7px;top:683.8px;font-size:12px;line-height:1;color:#333;font-weight:bold;text-decoration:underline">Clinical</div>
<div class="a" style="left:1503.3px;top:683.8px;font-size:12px;line-height:1;color:#333;font-weight:bold;text-decoration:underline">Primary</div>
<div class="a" style="left:1635.7px;top:683.8px;font-size:12px;line-height:1;color:#333;font-weight:bold;text-decoration:underline">Clinical Category</div>
<div class="a" style="left:8px;top:703px;width:1870px;height:22px;background:#f2f2f2;"></div>
<div class="a" style="left:8px;top:747px;width:1870px;height:22px;background:#f2f2f2;"></div>
<div class="a" style="left:8px;top:791px;width:1870px;height:22px;background:#f2f2f2;"></div>
<div class="a" style="left:8px;top:835px;width:1870px;height:22px;background:#f2f2f2;"></div>
<div class="a" style="left:8px;top:879px;width:1870px;height:22px;background:#f2f2f2;"></div>
<div class="a" style="left:26.5px;top:707.7px;font-size:12.5px;line-height:1;color:#484848">Tourette&#x27;s disorder</div>
<div class="a" style="left:580.7px;top:707.7px;font-size:12.5px;line-height:1;color:#484848">F95.2</div>
<div class="a" style="left:711.7px;top:707.7px;font-size:12.5px;line-height:1;color:#484848">2/15/2018</div>
<div class="a" style="left:1107.7px;top:707.7px;font-size:12.5px;line-height:1;color:#484848">1</div>
<svg class="a" style="left:1239.5px;top:707.8px" width="13" height="10" viewBox="0 0 13 10"><path d="M1 5.2 L4.6 8.6 L12 1.2" stroke="#1a9c1a" stroke-width="2.6" fill="none" stroke-linejoin="miter"/></svg>
<div class="a" style="left:1257.7px;top:708.1px;font-size:12px;line-height:1;color:#1a9c1a;font-weight:bold">Yes</div>
<div class="a" style="left:1371.7px;top:707.7px;font-size:12.5px;line-height:1;color:#484848">1</div>
<svg class="a" style="left:1503.5px;top:707.8px" width="13" height="10" viewBox="0 0 13 10"><path d="M1 5.2 L4.6 8.6 L12 1.2" stroke="#1a9c1a" stroke-width="2.6" fill="none" stroke-linejoin="miter"/></svg>
<div class="a" style="left:1521.5px;top:708.1px;font-size:12px;line-height:1;color:#1a9c1a;font-weight:bold">Yes</div>
<div class="a" style="left:1635.7px;top:707.7px;font-size:12.5px;line-height:1;color:#484848">Medical Management</div>
<div class="a" style="left:26.5px;top:729.7px;font-size:12.5px;line-height:1;color:#484848">Amebic brain abscess</div>
<div class="a" style="left:580.7px;top:729.7px;font-size:12.5px;line-height:1;color:#484848">A06.6</div>
<div class="a" style="left:711.7px;top:729.7px;font-size:12.5px;line-height:1;color:#484848">2/15/2018</div>
<div class="a" style="left:1107.7px;top:729.7px;font-size:12.5px;line-height:1;color:#484848">3</div>
<svg class="a" style="left:1239.5px;top:729.8px" width="13" height="10" viewBox="0 0 13 10"><path d="M1 5.2 L4.6 8.6 L12 1.2" stroke="#1a9c1a" stroke-width="2.6" fill="none" stroke-linejoin="miter"/></svg>
<div class="a" style="left:1257.7px;top:730.1px;font-size:12px;line-height:1;color:#1a9c1a;font-weight:bold">Yes</div>
<div class="a" style="left:1371.7px;top:729.7px;font-size:12.5px;line-height:1;color:#484848">3</div>
<svg class="a" style="left:1503.5px;top:729.3px" width="13" height="13" viewBox="0 0 13 13"><circle cx="6.5" cy="6.5" r="6.3" fill="#e45b5b"/><rect x="3" y="5.4" width="7" height="2.3" rx="1" fill="#fff"/></svg>
<div class="a" style="left:1521.5px;top:730.1px;font-size:12px;line-height:1;color:#e45b5b;font-weight:bold">No</div>
<div class="a" style="left:1635.7px;top:729.7px;font-size:12.5px;line-height:1;color:#484848">Acute Neurologic</div>
<div class="a" style="left:26.5px;top:751.7px;font-size:12.5px;line-height:1;color:#484848">Hypersplenism</div>
<div class="a" style="left:580.7px;top:751.7px;font-size:12.5px;line-height:1;color:#484848">D73.1</div>
<div class="a" style="left:711.7px;top:751.7px;font-size:12.5px;line-height:1;color:#484848">2/15/2018</div>
<div class="a" style="left:1107.7px;top:751.7px;font-size:12.5px;line-height:1;color:#484848">4</div>
<svg class="a" style="left:1239.5px;top:751.8px" width="13" height="10" viewBox="0 0 13 10"><path d="M1 5.2 L4.6 8.6 L12 1.2" stroke="#1a9c1a" stroke-width="2.6" fill="none" stroke-linejoin="miter"/></svg>
<div class="a" style="left:1257.7px;top:752.1px;font-size:12px;line-height:1;color:#1a9c1a;font-weight:bold">Yes</div>
<div class="a" style="left:1371.7px;top:751.7px;font-size:12.5px;line-height:1;color:#484848">4</div>
<svg class="a" style="left:1503.5px;top:751.3px" width="13" height="13" viewBox="0 0 13 13"><circle cx="6.5" cy="6.5" r="6.3" fill="#e45b5b"/><rect x="3" y="5.4" width="7" height="2.3" rx="1" fill="#fff"/></svg>
<div class="a" style="left:1521.5px;top:752.1px;font-size:12px;line-height:1;color:#e45b5b;font-weight:bold">No</div>
<div class="a" style="left:1635.7px;top:751.7px;font-size:12.5px;line-height:1;color:#484848">Medical Management</div>
<div class="a" style="left:26.5px;top:773.7px;font-size:12.5px;line-height:1;color:#484848">Typhoid fever</div>
<div class="a" style="left:580.7px;top:773.7px;font-size:12.5px;line-height:1;color:#484848">A01.0</div>
<div class="a" style="left:711.7px;top:773.7px;font-size:12.5px;line-height:1;color:#484848">1/19/2016</div>
<div class="a" style="left:1107.7px;top:773.7px;font-size:12.5px;line-height:1;color:#484848">5</div>
<svg class="a" style="left:1239.5px;top:773.8px" width="13" height="10" viewBox="0 0 13 10"><path d="M1 5.2 L4.6 8.6 L12 1.2" stroke="#1a9c1a" stroke-width="2.6" fill="none" stroke-linejoin="miter"/></svg>
<div class="a" style="left:1257.7px;top:774.1px;font-size:12px;line-height:1;color:#1a9c1a;font-weight:bold">Yes</div>
<div class="a" style="left:1371.7px;top:773.7px;font-size:12.5px;line-height:1;color:#484848">5</div>
<svg class="a" style="left:1503.5px;top:773.3px" width="13" height="13" viewBox="0 0 13 13"><circle cx="6.5" cy="6.5" r="6.3" fill="#e45b5b"/><rect x="3" y="5.4" width="7" height="2.3" rx="1" fill="#fff"/></svg>
<div class="a" style="left:1521.5px;top:774.1px;font-size:12px;line-height:1;color:#e45b5b;font-weight:bold">No</div>
<div class="a" style="left:1635.7px;top:773.7px;font-size:12.5px;line-height:1;color:#484848">Return to Provider</div>
<div class="a" style="left:26.5px;top:795.7px;font-size:12.5px;line-height:1;color:#484848">Sepsis, unspecified organism</div>
<div class="a" style="left:580.7px;top:795.7px;font-size:12.5px;line-height:1;color:#484848">A41.9</div>
<div class="a" style="left:711.7px;top:795.7px;font-size:12.5px;line-height:1;color:#484848">2/15/2018</div>
<div class="a" style="left:1107.7px;top:795.7px;font-size:12.5px;line-height:1;color:#484848">7</div>
<svg class="a" style="left:1239.5px;top:795.8px" width="13" height="10" viewBox="0 0 13 10"><path d="M1 5.2 L4.6 8.6 L12 1.2" stroke="#1a9c1a" stroke-width="2.6" fill="none" stroke-linejoin="miter"/></svg>
<div class="a" style="left:1257.7px;top:796.1px;font-size:12px;line-height:1;color:#1a9c1a;font-weight:bold">Yes</div>
<div class="a" style="left:1371.7px;top:795.7px;font-size:12.5px;line-height:1;color:#484848">7</div>
<svg class="a" style="left:1503.5px;top:795.3px" width="13" height="13" viewBox="0 0 13 13"><circle cx="6.5" cy="6.5" r="6.3" fill="#e45b5b"/><rect x="3" y="5.4" width="7" height="2.3" rx="1" fill="#fff"/></svg>
<div class="a" style="left:1521.5px;top:796.1px;font-size:12px;line-height:1;color:#e45b5b;font-weight:bold">No</div>
<div class="a" style="left:1635.7px;top:795.7px;font-size:12.5px;line-height:1;color:#484848">Acute Infections</div>
<div class="a" style="left:26.5px;top:817.7px;font-size:12.5px;line-height:1;color:#484848">Parkinson&#x27;s disease</div>
<div class="a" style="left:580.7px;top:817.7px;font-size:12.5px;line-height:1;color:#484848">G20.</div>
<div class="a" style="left:711.7px;top:817.7px;font-size:12.5px;line-height:1;color:#484848">7/18/2018</div>
<div class="a" style="left:1107.7px;top:817.7px;font-size:12.5px;line-height:1;color:#484848">8</div>
<svg class="a" style="left:1239.5px;top:817.8px" width="13" height="10" viewBox="0 0 13 10"><path d="M1 5.2 L4.6 8.6 L12 1.2" stroke="#1a9c1a" stroke-width="2.6" fill="none" stroke-linejoin="miter"/></svg>
<div class="a" style="left:1257.7px;top:818.1px;font-size:12px;line-height:1;color:#1a9c1a;font-weight:bold">Yes</div>
<div class="a" style="left:1371.7px;top:817.7px;font-size:12.5px;line-height:1;color:#484848">8</div>
<svg class="a" style="left:1503.5px;top:817.3px" width="13" height="13" viewBox="0 0 13 13"><circle cx="6.5" cy="6.5" r="6.3" fill="#e45b5b"/><rect x="3" y="5.4" width="7" height="2.3" rx="1" fill="#fff"/></svg>
<div class="a" style="left:1521.5px;top:818.1px;font-size:12px;line-height:1;color:#e45b5b;font-weight:bold">No</div>
<div class="a" style="left:1635.7px;top:817.7px;font-size:12.5px;line-height:1;color:#484848">Acute Neurologic</div>
<div class="a" style="left:26.5px;top:839.7px;font-size:12.5px;line-height:1;color:#484848">Essential (primary) hypertension</div>
<div class="a" style="left:580.7px;top:839.7px;font-size:12.5px;line-height:1;color:#484848">I10.</div>
<div class="a" style="left:711.7px;top:839.7px;font-size:12.5px;line-height:1;color:#484848">7/11/2018</div>
<div class="a" style="left:1107.7px;top:839.7px;font-size:12.5px;line-height:1;color:#484848">9</div>
<svg class="a" style="left:1239.5px;top:839.8px" width="13" height="10" viewBox="0 0 13 10"><path d="M1 5.2 L4.6 8.6 L12 1.2" stroke="#1a9c1a" stroke-width="2.6" fill="none" stroke-linejoin="miter"/></svg>
<div class="a" style="left:1257.7px;top:840.1px;font-size:12px;line-height:1;color:#1a9c1a;font-weight:bold">Yes</div>
<div class="a" style="left:1371.7px;top:839.7px;font-size:12.5px;line-height:1;color:#484848">9</div>
<svg class="a" style="left:1503.5px;top:839.3px" width="13" height="13" viewBox="0 0 13 13"><circle cx="6.5" cy="6.5" r="6.3" fill="#e45b5b"/><rect x="3" y="5.4" width="7" height="2.3" rx="1" fill="#fff"/></svg>
<div class="a" style="left:1521.5px;top:840.1px;font-size:12px;line-height:1;color:#e45b5b;font-weight:bold">No</div>
<div class="a" style="left:1635.7px;top:839.7px;font-size:12.5px;line-height:1;color:#484848">Return to Provider*</div>
<div class="a" style="left:26.5px;top:861.7px;font-size:12.5px;line-height:1;color:#484848">Rat-bite fever, unspecified</div>
<div class="a" style="left:580.7px;top:861.7px;font-size:12.5px;line-height:1;color:#484848">A25.9</div>
<div class="a" style="left:711.7px;top:861.7px;font-size:12.5px;line-height:1;color:#484848">2/15/2018</div>
<div class="a" style="left:1107.7px;top:861.7px;font-size:12.5px;line-height:1;color:#484848">10</div>
<svg class="a" style="left:1239.5px;top:861.8px" width="13" height="10" viewBox="0 0 13 10"><path d="M1 5.2 L4.6 8.6 L12 1.2" stroke="#1a9c1a" stroke-width="2.6" fill="none" stroke-linejoin="miter"/></svg>
<div class="a" style="left:1257.7px;top:862.1px;font-size:12px;line-height:1;color:#1a9c1a;font-weight:bold">Yes</div>
<div class="a" style="left:1371.7px;top:861.7px;font-size:12.5px;line-height:1;color:#484848">10</div>
<svg class="a" style="left:1503.5px;top:861.3px" width="13" height="13" viewBox="0 0 13 13"><circle cx="6.5" cy="6.5" r="6.3" fill="#e45b5b"/><rect x="3" y="5.4" width="7" height="2.3" rx="1" fill="#fff"/></svg>
<div class="a" style="left:1521.5px;top:862.1px;font-size:12px;line-height:1;color:#e45b5b;font-weight:bold">No</div>
<div class="a" style="left:1635.7px;top:861.7px;font-size:12.5px;line-height:1;color:#484848">Acute Infections</div>
<div class="a" style="left:26.5px;top:883.7px;font-size:12.5px;line-height:1;color:#484848">Typhoid fever with heart involvement</div>
<div class="a" style="left:580.7px;top:883.7px;font-size:12.5px;line-height:1;color:#484848">A01.02</div>
<div class="a" style="left:711.7px;top:883.7px;font-size:12.5px;line-height:1;color:#484848">2/15/2018</div>
<div class="a" style="left:1107.7px;top:883.7px;font-size:12.5px;line-height:1;color:#484848">999</div>
<svg class="a" style="left:1239.5px;top:883.8px" width="13" height="10" viewBox="0 0 13 10"><path d="M1 5.2 L4.6 8.6 L12 1.2" stroke="#1a9c1a" stroke-width="2.6" fill="none" stroke-linejoin="miter"/></svg>
<div class="a" style="left:1257.7px;top:884.1px;font-size:12px;line-height:1;color:#1a9c1a;font-weight:bold">Yes</div>
<div class="a" style="left:1371.7px;top:883.7px;font-size:12.5px;line-height:1;color:#484848">999</div>
<svg class="a" style="left:1503.5px;top:883.3px" width="13" height="13" viewBox="0 0 13 13"><circle cx="6.5" cy="6.5" r="6.3" fill="#e45b5b"/><rect x="3" y="5.4" width="7" height="2.3" rx="1" fill="#fff"/></svg>
<div class="a" style="left:1521.5px;top:884.1px;font-size:12px;line-height:1;color:#e45b5b;font-weight:bold">No</div>
<div class="a" style="left:1635.7px;top:883.7px;font-size:12.5px;line-height:1;color:#484848">Acute Infections</div>
<div class="a" style="left:8px;top:892px;width:1870px;height:9px;background:#fff"></div>
<div class="a" style="left:1878px;top:678px;width:17px;height:214px;background:#f1f1f1;"></div>
<div class="a" style="left:1880px;top:693px;width:13px;height:148px;background:#c1c1c1;"></div>
<svg class="a" style="left:1882px;top:684px" width="9" height="5" viewBox="0 0 9 5"><path d="M0 5 L4.5 0 L9 5 Z" fill="#a3a3a3"/></svg>
<svg class="a" style="left:1882px;top:881px" width="9" height="5" viewBox="0 0 9 5"><path d="M0 0 L4.5 5 L9 0 Z" fill="#505050"/></svg>
<div class="a panel" style="left:8px;top:911px;width:939px;height:49px"></div>
<svg class="a" style="left:17px;top:922px" width="13" height="14" viewBox="0 0 13 14"><path d="M0 0 L13 0 L13 9 L8 14 L0 14 Z" fill="#3d80f5"/><path d="M8 14 L8 9 L13 9 Z" fill="#9fc0fa"/></svg>
<div class="a" style="left:38.0px;top:921.7px;font-size:13.3px;line-height:1;color:#333;font-weight:bold">INTERDISCIPLINARY PROGRESS NOTES</div>
<svg class="a" style="left:303.5px;top:921px" width="14" height="14" viewBox="0 0 14 14"><circle cx="7" cy="7" r="7" fill="#8ea4c8"/><rect x="6" y="6" width="2.2" height="5" fill="#fff"/><rect x="5.2" y="6" width="2" height="1.1" fill="#fff"/><rect x="5.2" y="10" width="3.8" height="1.1" fill="#fff"/><circle cx="7.1" cy="4" r="1.15" fill="#fff"/></svg>
<div class="a" style="left:872.3px;top:922.8px;font-size:12px;line-height:1;color:#3f66a8;font-weight:bold">Last 7 Days</div>
<div class="a panel" style="left:956px;top:911px;width:939px;height:49px"></div>
<svg class="a" style="left:965px;top:922px" width="11" height="14" viewBox="0 0 11 14"><path d="M0 0 L7 0 L11 4 L11 14 L0 14 Z" fill="#3d80f5"/><path d="M7 0 L7 4 L11 4" fill="#9fc0fa"/><path d="M2.5 11.5 L3 9.5 L7.5 5 L9 6.5 L4.5 11 Z" fill="#fff"/></svg>
<div class="a" style="left:984.3px;top:921.7px;font-size:13.3px;line-height:1;color:#333;font-weight:bold">ASSESSMENTS</div>
<svg class="a" style="left:1090px;top:921px" width="14" height="14" viewBox="0 0 14 14"><circle cx="7" cy="7" r="7" fill="#8ea4c8"/><rect x="6" y="6" width="2.2" height="5" fill="#fff"/><rect x="5.2" y="6" width="2" height="1.1" fill="#fff"/><rect x="5.2" y="10" width="3.8" height="1.1" fill="#fff"/><circle cx="7.1" cy="4" r="1.15" fill="#fff"/></svg>
<div class="a" style="left:1803.3px;top:922.8px;font-size:12px;line-height:1;color:#3f66a8;font-weight:bold">LAST 90 DAYS</div>
<!-- MAINSCROLL -->
<div class="a" style="left:1903px;top:162px;width:17px;height:775px;background:#f1f1f1"><div class="a" style="left:2px;top:17px;width:13px;height:448px;background:#c1c1c1"></div><svg class="a" style="left:4px;top:6px" width="9" height="5" viewBox="0 0 9 5"><path d="M0 5 L4.5 0 L9 5 Z" fill="#a3a3a3"/></svg><svg class="a" style="left:4px;top:764px" width="9" height="5" viewBox="0 0 9 5"><path d="M0 0 L4.5 5 L9 0 Z" fill="#505050"/></svg></div>
</body></html>
